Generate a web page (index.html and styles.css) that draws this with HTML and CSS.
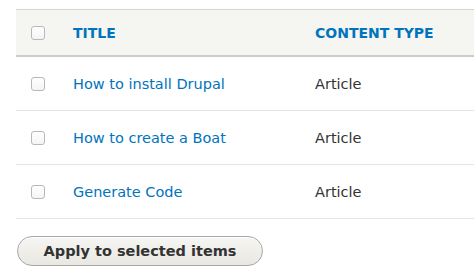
FILE: index.html
```html
<!DOCTYPE html>
<html>
<head>
<meta charset="utf-8">
<link rel="stylesheet" href="styles.css">
</head>
<body>
<div class="wrap">
  <table class="content-table">
    <thead>
      <tr>
        <th class="col-select"><span class="checkbox"></span></th>
        <th class="col-title"><a href="#">TITLE</a></th>
        <th class="col-type"><a href="#">CONTENT TYPE</a></th>
      </tr>
    </thead>
    <tbody>
      <tr>
        <td class="col-select"><span class="checkbox"></span></td>
        <td class="col-title"><a href="#">How to install Drupal</a></td>
        <td class="col-type">Article</td>
      </tr>
      <tr>
        <td class="col-select"><span class="checkbox"></span></td>
        <td class="col-title"><a href="#">How to create a Boat</a></td>
        <td class="col-type">Article</td>
      </tr>
      <tr>
        <td class="col-select"><span class="checkbox"></span></td>
        <td class="col-title"><a href="#">Generate Code</a></td>
        <td class="col-type">Article</td>
      </tr>
    </tbody>
  </table>
  <div class="actions">
    <button class="button" type="button">Apply to selected items</button>
  </div>
</div>
</body>
</html>
```
FILE: styles.css
```css
html, body {
  margin: 0;
  padding: 0;
  background: #ffffff;
}
body {
  font-family: "DejaVu Sans", Verdana, sans-serif;
  font-size: 14.5px;
  color: #333333;
}
.wrap {
  padding: 9px 0 0 16px;
}
.content-table {
  width: 100%;
  border-collapse: collapse;
  border-spacing: 0;
}
.content-table thead tr {
  background: #f5f5f2;
  border-top: 1px solid #d4d4d4;
  border-bottom: 2px solid #cccccc;
}
.content-table th {
  height: 45px;
  padding: 0;
  text-align: left;
  vertical-align: middle;
  font-size: 14px;
  font-weight: bold;
}
.content-table th a {
  color: #0074bd;
  text-decoration: none;
}
.content-table tbody tr {
  border-bottom: 1px solid #e6e4df;
}
.content-table td {
  height: 53px;
  padding: 0;
  vertical-align: middle;
}
.content-table td a {
  color: #0074bd;
  text-decoration: none;
}
.col-select {
  width: 57px;
  padding-left: 15px !important;
  box-sizing: border-box;
}
.col-title {
  width: 242px;
}
.checkbox {
  display: block;
  width: 14px;
  height: 14px;
  box-sizing: border-box;
  border: 1px solid #b8b8b8;
  border-radius: 3px;
  background: linear-gradient(#ffffff, #f4f4f4);
  margin-top: 1px;
}
.actions {
  padding: 17px 0 0 1px;
}
.button {
  font-family: "DejaVu Sans", Verdana, sans-serif;
  font-size: 14.5px;
  font-weight: bold;
  color: #333333;
  height: 30px;
  width: 246px;
  padding: 0;
  border: 1px solid #a6a6a6;
  border-radius: 20px;
  background: linear-gradient(#f6f6f3, #e8e7e0);
  box-shadow: inset 0 1px 0 #ffffff;
}
```
